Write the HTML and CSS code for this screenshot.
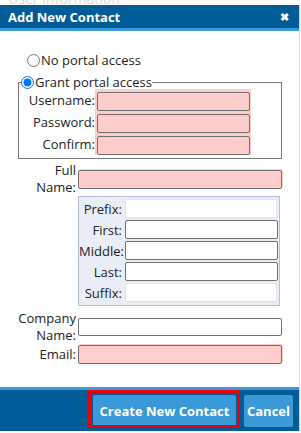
FILE: index.html
```html
<!DOCTYPE html>
<html lang="en">
<head>
  <meta charset="UTF-8">
  <meta name="viewport" content="width=device-width, initial-scale=1.0">
  <title>Add New Contact</title>
  <link rel="stylesheet" href="styles.css">
</head>
<body>
  <div class="backdrop"><span>User Information</span></div>
  <div class="dialog">
    <div class="dialog-title">
      <span>Add New Contact</span>
      <span class="close">&#x2716;</span>
    </div>

    <form class="dialog-body">
      <label class="radio first-radio"><input type="radio" name="portal"> No portal access</label>

      <fieldset class="portal">
        <legend><label class="radio"><input type="radio" name="portal" checked> Grant portal access</label></legend>
        <div class="prow">
          <label>Username:</label>
          <span class="req"><input type="text"></span>
        </div>
        <div class="prow">
          <label>Password:</label>
          <span class="req"><input type="password"></span>
        </div>
        <div class="prow">
          <label>Confirm:</label>
          <span class="req"><input type="password"></span>
        </div>
      </fieldset>

      <div class="row fullname">
        <label>Full<br>Name:</label>
        <input type="text" class="pink">
      </div>

      <div class="name-parts">
        <div class="nrow"><label>Prefix:</label><input type="text" class="soft"></div>
        <div class="nrow"><label>First:</label><input type="text"></div>
        <div class="nrow"><label>Middle:</label><input type="text"></div>
        <div class="nrow"><label>Last:</label><input type="text"></div>
        <div class="nrow"><label>Suffix:</label><input type="text" class="soft"></div>
      </div>

      <div class="row company">
        <label>Company<br>Name:</label>
        <input type="text">
      </div>

      <div class="row email">
        <label>Email:</label>
        <input type="text" class="pink">
      </div>
    </form>

    <div class="dialog-footer">
      <button type="button" class="btn create">Create New Contact</button>
      <button type="button" class="btn">Cancel</button>
      <span class="highlight"></span>
    </div>
  </div>
</body>
</html>
```

FILE: styles.css
```css
body {
  margin: 0;
  width: 301px;
  height: 433px;
  overflow: hidden;
  background-color: #fff;
  font-family: "Open Sans", sans-serif;
  font-size: 13px;
  color: #222;
}
.backdrop {
  height: 5px;
  overflow: hidden;
  padding-left: 8px;
  color: #dadada;
  font-size: 14px;
  line-height: 14px;
}
.backdrop span {
  display: block;
  margin-top: -8px;
}
.dialog {
  width: 299px;
  box-shadow: 1px 0 0 #d6d6d6;
}
.dialog-title {
  height: 23px;
  display: flex;
  justify-content: space-between;
  align-items: center;
  padding: 0 10px 0 8px;
  background-color: #005b96;
  border-bottom: 3px solid #3a9ad9;
  color: #fff;
  font-weight: bold;
  font-size: 13px;
}
.close {
  font-size: 11px;
}
.dialog-body {
  height: 356px;
  box-sizing: border-box;
  padding-top: 22px;
}
.radio {
  display: flex;
  align-items: center;
  line-height: 14px;
  font-size: 13px;
}
.radio input {
  width: 13px;
  height: 13px;
  margin: 0 1px 0 0;
}
.first-radio {
  margin-left: 27px;
  height: 14px;
}
.portal {
  margin: 8px 0 0 18px;
  width: 264px;
  box-sizing: border-box;
  padding: 0 0 3px 0;
  border: 1px solid #7a7a7a;
}
.portal legend {
  padding: 0;
  margin-left: 2px;
}
.prow {
  display: flex;
}
.prow label {
  width: 76px;
  text-align: right;
  line-height: 22px;
}
.req {
  display: block;
  background-color: #ffcccc;
  padding: 3px 1px 0 2px;
}
input[type="text"], input[type="password"] {
  box-sizing: border-box;
  height: 19px;
  margin: 0;
  padding: 1px 3px;
  border: 1px solid #6f6f6f;
  border-radius: 2px;
  background-color: #fff;
  font-family: inherit;
  font-size: 12px;
}
.prow input {
  width: 153px;
  background-color: #ffcccc;
}
.row {
  display: flex;
  align-items: center;
}
.row label {
  width: 76px;
  margin-right: 2px;
  text-align: right;
  line-height: 17px;
}
.row input {
  width: 204px;
}
.row input.pink {
  background-color: #ffcccc;
  box-shadow: 1px -1px 0 #ffcccc;
}
.fullname {
  margin-top: 3px;
}
.name-parts {
  margin-left: 78px;
  width: 202px;
  box-sizing: border-box;
  padding: 1px 0 2px 0;
  background-color: #e9edf6;
  border: 1px solid #b3bfdc;
}
.nrow {
  display: flex;
  align-items: center;
  height: 21px;
}
.nrow label {
  width: 43px;
  margin-right: 3px;
  text-align: right;
}
.nrow input {
  width: 153px;
}
.nrow input.soft {
  width: 152px;
  border-color: #dfe3ea;
}
.company {
  margin-top: 4px;
}
.company input {
  height: 18px;
}
.email label {
  line-height: 20px;
}
.dialog-footer {
  position: relative;
  height: 44px;
  box-sizing: border-box;
  display: flex;
  justify-content: flex-end;
  gap: 8px;
  padding: 5px 6px 0 0;
  background-color: #005b96;
  border-top: 3px solid #3a9ad9;
}
.btn {
  height: 32px;
  padding: 0 3px;
  border: none;
  border-radius: 2px;
  background-color: #3a9ad9;
  color: #fff;
  font-family: "Open Sans", sans-serif;
  font-weight: bold;
  font-size: 13px;
  white-space: nowrap;
}
.create {
  width: 143px;
}
.highlight {
  position: absolute;
  left: 88px;
  top: 0;
  width: 152px;
  height: 38px;
  box-sizing: border-box;
  border: 3px solid #e8000b;
}
```
